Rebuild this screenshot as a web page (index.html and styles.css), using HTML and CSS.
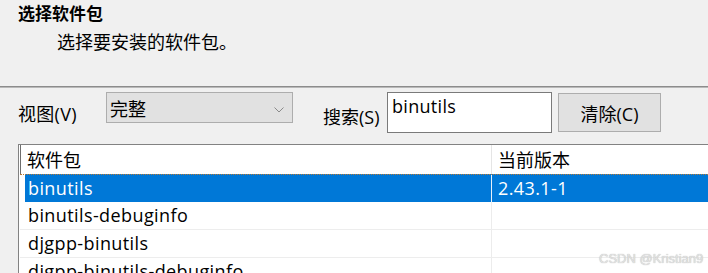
FILE: index.html
```html
<!DOCTYPE html>
<html lang="zh-CN">
<head>
<meta charset="utf-8">
<title>选择软件包</title>
<link rel="stylesheet" href="styles.css">
</head>
<body>
<div class="page">
  <div class="banner">
    <div class="title">选择软件包</div>
    <div class="subtitle">选择要安装的软件包。</div>
  </div>
  <div class="sep"></div>
  <div class="toolbar">
    <div class="lbl lbl-view">视图(V)</div>
    <div class="combo">
      <span class="combo-text">完整</span>
      <svg class="chev" width="10" height="6" viewBox="0 0 10 6"><path d="M0.5 0.5 L5 5 L9.5 0.5" fill="none" stroke="#8a8a8a" stroke-width="1"/></svg>
    </div>
    <div class="lbl lbl-search">搜索(S)</div>
    <div class="search">binutils</div>
    <div class="btn">清除(C)</div>
  </div>
  <div class="list">
    <div class="row head">
      <div class="c1">软件包</div>
      <div class="c2">当前版本</div>
    </div>
    <div class="row sel">
      <div class="c1">binutils</div>
      <div class="c2">2.43.1-1</div>
    </div>
    <div class="row">
      <div class="c1">binutils-debuginfo</div>
      <div class="c2"></div>
    </div>
    <div class="row">
      <div class="c1">djgpp-binutils</div>
      <div class="c2"></div>
    </div>
    <div class="row">
      <div class="c1">djgpp-binutils-debuginfo</div>
      <div class="c2"></div>
    </div>
  </div>
  <div class="watermark">CSDN @Kristian9</div>
</div>
</body>
</html>
```
FILE: styles.css
```css
html, body {
  margin: 0;
  padding: 0;
  background: #f0f0f0;
}
.page {
  position: relative;
  width: 708px;
  height: 273px;
  overflow: hidden;
  font-family: "Open Sans", "Noto Sans CJK SC", sans-serif;
  font-size: 18px;
  color: #000;
}
.banner {
  height: 86px;
  box-sizing: border-box;
  padding-top: 3px;
}
.title {
  padding-left: 18px;
  font-size: 17px;
  font-weight: bold;
  line-height: 20px;
  font-family: "Noto Sans CJK SC", sans-serif;
}
.subtitle {
  margin-top: 6px;
  padding-left: 57px;
  line-height: 24px;
  font-family: "Noto Sans CJK SC", sans-serif;
}
.sep {
  height: 0;
  border-top: 1px solid #8c8c8c;
  border-bottom: 1px solid #b9b9b9;
}
.toolbar {
  height: 56px;
  box-sizing: border-box;
  padding-top: 4px;
  display: flex;
  align-items: flex-start;
}
.lbl {
  line-height: 24px;
  white-space: nowrap;
}
.lbl-view {
  margin-left: 18px;
  width: 88px;
  margin-top: 10px;
  letter-spacing: 0.3px;
}
.combo {
  width: 187px;
  height: 31px;
  box-sizing: border-box;
  border: 1px solid #adadad;
  background: #e1e1e1;
  display: flex;
  align-items: flex-start;
  justify-content: space-between;
  padding: 4px 8px 0 3px;
}
.combo-text {
  line-height: 24px;
}
.chev {
  margin-top: 10px;
}
.lbl-search {
  margin-left: 30px;
  width: 64px;
  margin-top: 13px;
}
.search {
  width: 165px;
  height: 41px;
  box-sizing: border-box;
  border: 1px solid #7a7a7a;
  background: #fff;
  padding: 1px 0 0 4px;
  line-height: 24px;
  letter-spacing: 0.3px;
}
.btn {
  margin-left: 6px;
  margin-top: 1px;
  width: 103px;
  height: 39px;
  box-sizing: border-box;
  border: 1px solid #adadad;
  background: #e1e1e1;
  text-align: center;
  line-height: 24px;
  padding-top: 8px;
}
.list {
  margin-left: 18px;
  width: 720px;
  height: 200px;
  border-top: 1px solid #828282;
  border-left: 1px solid #828282;
  background: #fff;
  padding-left: 1px;
}
.row {
  display: grid;
  grid-template-columns: 471px 1fr;
  height: 28px;
  box-sizing: border-box;
  border-bottom: 1px solid #ededed;
  letter-spacing: 0.4px;
}
.row .c1 {
  padding-left: 8px;
  line-height: 27px;
  white-space: nowrap;
}
.row .c2 {
  border-left: 1px solid #ececec;
  padding-left: 6px;
  line-height: 27px;
  white-space: nowrap;
}
.row.head {
  height: 29px;
  border-bottom: none;
  letter-spacing: 0;
}
.row.head .c1 {
  border-left: 1px solid #6e6e6e;
  padding-left: 6px;
  line-height: 29px;
  font-family: "Noto Sans CJK SC", sans-serif;
}
.row.head .c2 {
  line-height: 29px;
  font-family: "Noto Sans CJK SC", sans-serif;
  border-left-color: #e5e5e5;
}
.row.sel {
  border-top: 1px dotted #b97a36;
  border-bottom: none;
  height: 28px;
  color: #fff;
  background: linear-gradient(to right, #fff 5px, #0078d7 5px);
}
.row.sel .c1 {
  line-height: 27px;
}
.row.sel .c2 {
  border-left-color: #e6f0fa;
}
.watermark {
  position: absolute;
  left: 599px;
  top: 251px;
  font-family: "Liberation Sans", sans-serif;
  font-size: 13px;
  line-height: 16px;
  color: #e2e2e2;
  text-shadow: 0 0 1px #a8a8a8;
}
```
